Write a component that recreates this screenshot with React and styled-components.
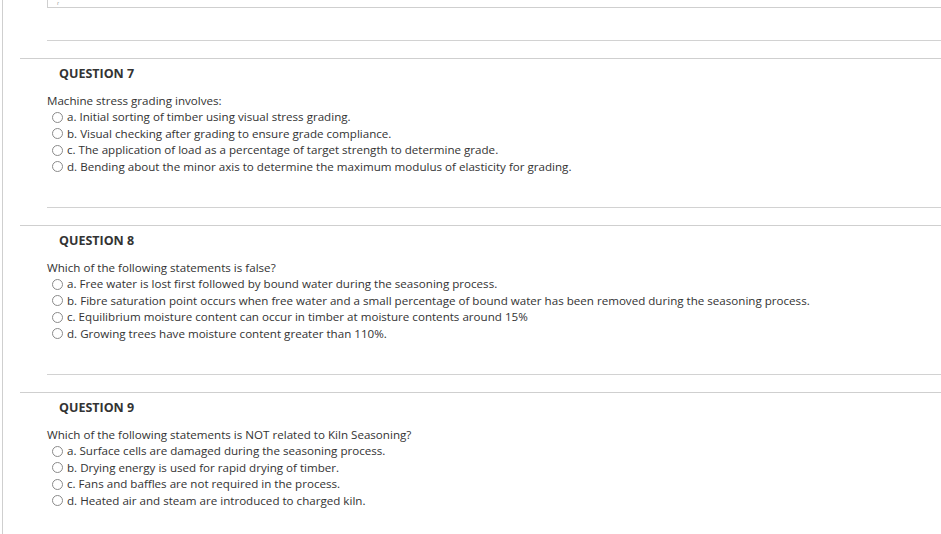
import React from 'react';
import styled, { createGlobalStyle } from 'styled-components';

const GlobalStyle = createGlobalStyle`
  html, body {
    margin: 0;
    padding: 0;
    background: #fff;
  }
  body {
    font-family: "Open Sans", "Liberation Sans", Arial, sans-serif;
    color: #333;
    overflow: hidden;
  }
`;

const Page = styled.div`
  margin-left: 2px;
  border-left: 1px solid #cfcfcf;
  min-height: 534px;
  box-sizing: border-box;
`;

const PrevAnswerBox = styled.div`
  margin-left: 44px;
  height: 7px;
  border-left: 1px solid #cfcfcf;
  border-bottom: 1px solid #cfcfcf;
  position: relative;
`;

const Caret = styled.span`
  position: absolute;
  left: 9px;
  top: 0;
  font-size: 6px;
  line-height: 6px;
  color: #999;
`;

const Divider = styled.div`
  margin-left: 44px;
  margin-top: ${({ top }) => top}px;
  border-top: 1px solid #d2d2d2;
`;

const Section = styled.section`
  margin-left: 17px;
  margin-top: 17px;
  border-top: 1px solid #cfcfcf;
`;

const Header = styled.h3`
  margin: 0;
  padding: 6px 0 0 39px;
  font-size: 12.5px;
  line-height: 18px;
  font-weight: 700;
  color: #333;
`;

const Body = styled.div`
  margin-left: 27px;
  padding-top: 10px;
  font-size: 11.6px;
  line-height: 16px;
`;

const Prompt = styled.div`
  color: #333;
`;

const Options = styled.ul`
  list-style: none;
  margin: 0;
  padding: 0 0 0 5px;
`;

const Option = styled.li`
  display: flex;
  align-items: center;
  height: 16.5px;
  white-space: nowrap;
`;

const Radio = styled.span`
  width: 11px;
  height: 11px;
  box-sizing: border-box;
  border: 1px solid #8a8a8a;
  border-radius: 50%;
  background: #fff;
  margin-right: 4px;
  flex: none;
`;

const Bottom = styled.div`
  margin-top: 32px;
  border-top: 1px solid #d2d2d2;
`;

const questions = [
  {
    n: 7,
    prompt: 'Machine stress grading involves:',
    options: [
      'a. Initial sorting of timber using visual stress grading.',
      'b. Visual checking after grading to ensure grade compliance.',
      'c. The application of load as a percentage of target strength to determine grade.',
      'd. Bending about the minor axis to determine the maximum modulus of elasticity for grading.',
    ],
  },
  {
    n: 8,
    prompt: 'Which of the following statements is false?',
    options: [
      'a. Free water is lost first followed by bound water during the seasoning process.',
      'b. Fibre saturation point occurs when free water and a small percentage of bound water has been removed during the seasoning process.',
      'c. Equilibrium moisture content can occur in timber at moisture contents around 15%',
      'd. Growing trees have moisture content greater than 110%.',
    ],
  },
  {
    n: 9,
    prompt: 'Which of the following statements is NOT related to Kiln Seasoning?',
    options: [
      'a. Surface cells are damaged during the seasoning process.',
      'b. Drying energy is used for rapid drying of timber.',
      'c. Fans and baffles are not required in the process.',
      'd. Heated air and steam are introduced to charged kiln.',
    ],
  },
];

export default function App() {
  return (
    <>
      <GlobalStyle />
      <Page>
        <PrevAnswerBox>
          <Caret>ɾ</Caret>
        </PrevAnswerBox>
        <Divider top={32} />
        {questions.map((q, i) => (
          <Section key={q.n}>
            <Header>QUESTION {q.n}</Header>
            <Body>
              <Prompt>{q.prompt}</Prompt>
              <Options>
                {q.options.map((o) => (
                  <Option key={o}>
                    <Radio />
                    {o}
                  </Option>
                ))}
              </Options>
              {i < questions.length - 1 && <Bottom />}
            </Body>
          </Section>
        ))}
      </Page>
    </>
  );
}
